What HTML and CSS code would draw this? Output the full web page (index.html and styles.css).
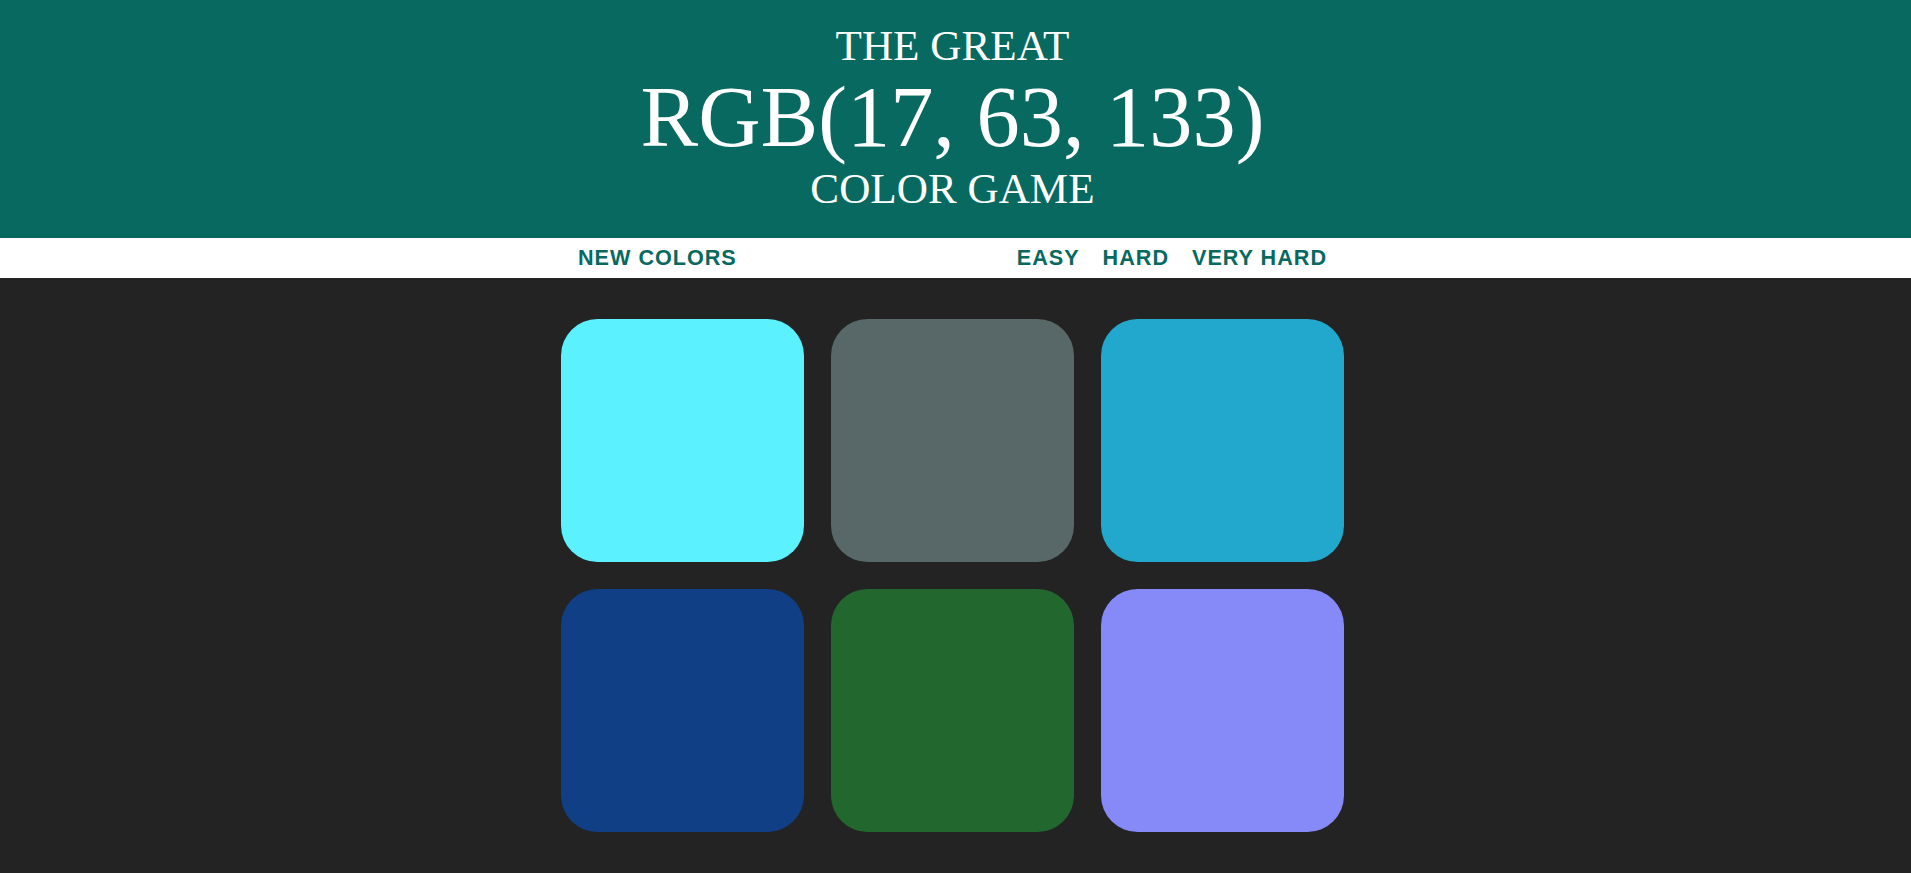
FILE: index.html
```html
<!DOCTYPE html>
<html lang="en">
<head>
<meta charset="utf-8">
<title>Color Game</title>
<link rel="stylesheet" href="styles.css">
</head>
<body>
<h1 class="title">The Great<br><span class="color-display">RGB(17, 63, 133)</span><br>Color Game</h1>
<div class="stripe">
  <button class="btn btn-reset">New Colors</button>
  <span class="message"></span>
  <button class="btn mode">Easy</button>
  <button class="btn mode">Hard</button>
  <button class="btn mode">Very Hard</button>
</div>
<div class="board">
  <div class="square sq-1"></div>
  <div class="square sq-2"></div>
  <div class="square sq-3"></div>
  <div class="square sq-4"></div>
  <div class="square sq-5"></div>
  <div class="square sq-6"></div>
</div>
</body>
</html>
```
FILE: styles.css
```css
html, body {
  margin: 0;
  padding: 0;
}

body {
  background: #232323;
  font-family: "Liberation Serif", "Times New Roman", serif;
  height: 873px;
  overflow: hidden;
}

.title {
  margin: 0;
  padding: 22px 6px 26px 0;
  background: #07695f;
  color: #ffffff;
  font-weight: normal;
  font-size: 43.2px;
  line-height: 1.1;
  text-align: center;
  text-transform: uppercase;
}

.color-display {
  font-size: 200%;
}

.stripe {
  display: flex;
  justify-content: center;
  align-items: center;
  height: 40px;
  padding-right: 6px;
  background: #ffffff;
}

.btn {
  border: none;
  background: none;
  margin: 0;
  padding: 0 8px;
  height: 100%;
  font-family: "Liberation Sans", Arial, sans-serif;
  font-size: 21.6px;
  font-weight: 700;
  letter-spacing: 1px;
  text-transform: uppercase;
  color: #07695f;
  cursor: pointer;
}

.message {
  display: inline-block;
  width: 264px;
}

.mode + .mode {
  margin-left: 7px;
}

.board {
  display: grid;
  grid-template-columns: repeat(3, 243px);
  gap: 27px;
  justify-content: center;
  margin-top: 40.5px;
  padding-right: 6px;
}

.square {
  width: 243px;
  height: 243px;
  border-radius: 15%;
}

.sq-1 { background: #5cf1ff; }
.sq-2 { background: #586868; }
.sq-3 { background: #21a8cc; }
.sq-4 { background: #113f85; }
.sq-5 { background: #22682e; }
.sq-6 { background: #8689f8; }
```
